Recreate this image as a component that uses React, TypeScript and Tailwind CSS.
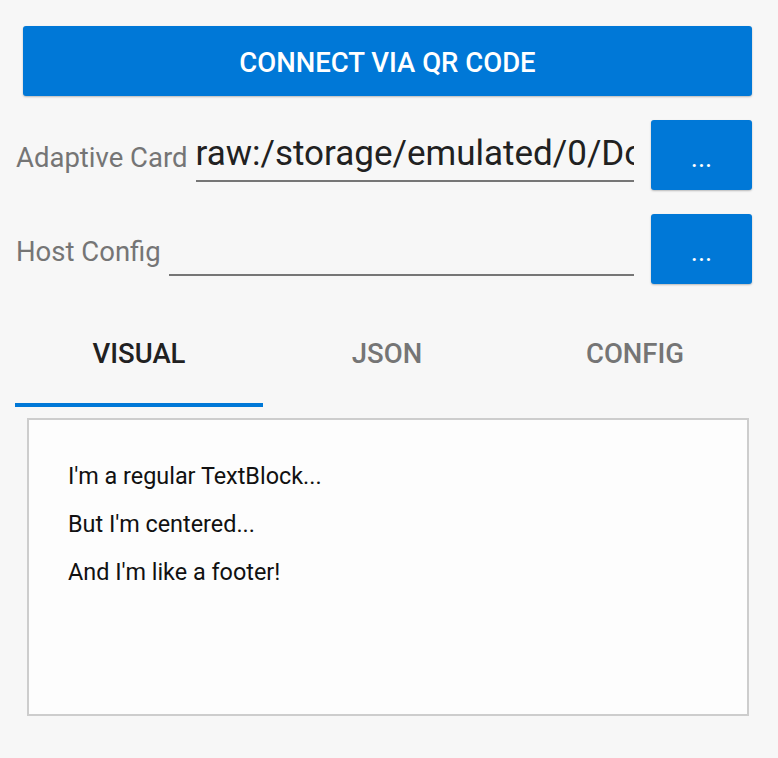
import React from 'react';

const font = { fontFamily: 'Roboto, "Noto Sans", sans-serif' };

function PickerRow({ label, value }: { label: string; value?: string }) {
  return (
    <div className="ml-[16px] mr-[26px] flex h-[70px] items-end">
      <span className="mb-[16px] shrink-0 text-[27.5px] leading-[32px] text-[#757575]">{label}</span>
      <div className="mb-[8px] ml-[8px] min-w-0 flex-1 overflow-hidden border-b-2 border-[#767676] pb-[4px]">
        <div className="h-[44px] overflow-hidden whitespace-nowrap text-[35px] leading-[44px] text-[#212121]">
          {value}
        </div>
      </div>
      <button className="ml-[17px] flex h-[70px] w-[101px] shrink-0 items-center justify-center rounded-[3px] bg-[#0078d7] pt-[6px] text-[27px] text-white shadow-[0_1px_2px_rgba(0,0,0,0.25)]">
        ...
      </button>
    </div>
  );
}

export default function App() {
  const tabs = ['VISUAL', 'JSON', 'CONFIG'];

  return (
    <div className="flex min-h-screen flex-col bg-[#f7f7f7]" style={font}>
      <button className="ml-[23px] mr-[26px] mt-[26px] flex h-[70px] items-center justify-center rounded-[3px] bg-[#0078d7] pt-[3px] text-[27.5px] font-medium text-white shadow-[0_1px_2px_rgba(0,0,0,0.25)]">
        CONNECT VIA QR CODE
      </button>

      <div className="mt-[24px] flex flex-col gap-[24px]">
        <PickerRow label="Adaptive Card" value="raw:/storage/emulated/0/Download/card.json" />
        <PickerRow label="Host Config" />
      </div>

      <div className="ml-[15px] mr-[19px] mt-[26px] grid grid-cols-3">
        {tabs.map((t, i) => (
          <div key={t} className="flex h-[97px] flex-col items-center">
            <span
              className={`pt-[28px] text-[27.5px] font-medium leading-[32px] ${
                i === 0 ? 'text-[#212121]' : 'text-[#757575]'
              }`}
            >
              {t}
            </span>
            <div className="flex-1" />
            <div className={`h-[4px] w-full ${i === 0 ? 'bg-[#0078d7]' : ''}`} />
          </div>
        ))}
      </div>

      <div className="ml-[27px] mr-[29px] mt-[11px] flex h-[298px] flex-col border-2 border-[#cdcdcd] bg-[#fdfdfd]">
        <div className="flex flex-col gap-[20px] pl-[39px] pt-[42px] text-[23.4px] leading-[28px] text-[#111111]">
          <p>I'm a regular TextBlock...</p>
          <p>But I'm centered...</p>
          <p>And I'm like a footer!</p>
        </div>
      </div>
    </div>
  );
}
